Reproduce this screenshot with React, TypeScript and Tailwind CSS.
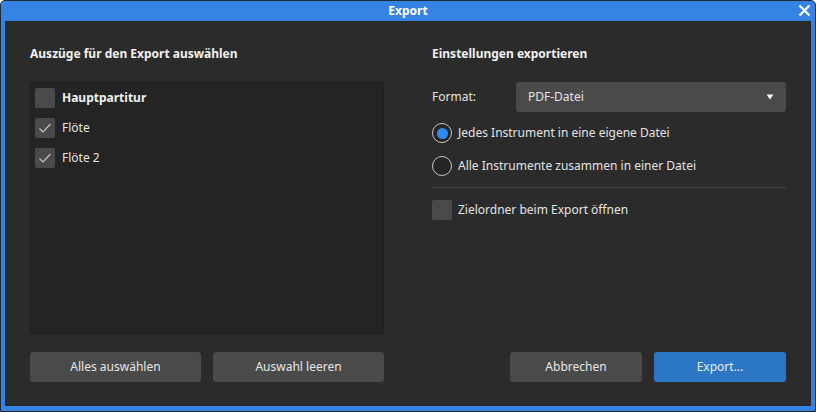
import { useState } from "react";

const font = { fontFamily: '"Noto Sans", "Open Sans", sans-serif' };

type Part = { name: string; checked: boolean; bold?: boolean };

const CheckBox = ({ checked }: { checked: boolean }) => (
  <span className="flex h-[20px] w-[20px] shrink-0 items-center justify-center rounded-[2px] bg-[#4a4a4a]">
    {checked && (
      <svg width="14" height="14" viewBox="0 0 14 14" fill="none">
        <path d="M1.5 7.5 L5 11 L12.5 3" stroke="#c8c8c8" strokeWidth="1.1" />
      </svg>
    )}
  </span>
);

const Radio = ({ on }: { on: boolean }) => (
  <span className="flex h-[20px] w-[20px] shrink-0 items-center justify-center rounded-full border-[1.5px] border-[#c9c9c9] bg-[#252525]">
    {on && <span className="h-[11px] w-[11px] rounded-full bg-[#2f8af2]" />}
  </span>
);

const Button = ({ label, primary }: { label: string; primary?: boolean }) => (
  <button
    className={
      primary
        ? "h-[30px] rounded-[3px] bg-[#2b77c5] text-[12px] text-[#eaeaea]"
        : "h-[30px] rounded-[3px] bg-[#4a4a4a] text-[12px] text-[#e6e6e6]"
    }
  >
    {label}
  </button>
);

const App = () => {
  const [parts] = useState<Part[]>([
    { name: "Hauptpartitur", checked: false, bold: true },
    { name: "Flöte", checked: true },
    { name: "Flöte 2", checked: true },
  ]);

  return (
    <div
      style={font}
      className="flex h-[412px] w-[816px] flex-col overflow-hidden rounded-t-[5px] border border-[#1d2a38] bg-[#3584e4]"
    >
      {/* title bar */}
      <div className="relative flex h-[20px] shrink-0 items-center justify-center">
        <span className="text-[12px] font-bold text-white">Export</span>
        <svg className="absolute right-[4px] top-[3px]" width="13" height="13" viewBox="0 0 13 13">
          <path d="M1.5 1.5 L11.5 11.5 M11.5 1.5 L1.5 11.5" stroke="#fff" strokeWidth="2.2" />
        </svg>
      </div>

      <div className="mx-[4px] mb-[5px] flex flex-1 gap-[48px] border border-[#262626] bg-[#2b2b2b] px-[24px] pb-[23px] pt-[22px] text-[12px] text-[#e3e3e3]">
        {/* parts */}
        <div className="flex w-[354px] flex-col">
          <div className="h-[20px] font-bold leading-[20px] text-[#f0f0f0]">Auszüge für den Export auswählen</div>
          <div className="mt-[18px] flex h-[252px] flex-col border border-[#1f1f1f] bg-[#242424] px-[4px]">
            {parts.map((p) => (
              <label key={p.name} className="flex h-[30px] items-center gap-[7px]">
                <CheckBox checked={p.checked} />
                <span className={p.bold ? "font-bold text-[#f0f0f0]" : ""}>{p.name}</span>
              </label>
            ))}
          </div>
          <div className="mt-auto grid grid-cols-2 gap-[12px]">
            <Button label="Alles auswählen" />
            <Button label="Auswahl leeren" />
          </div>
        </div>

        {/* settings */}
        <div className="flex w-[354px] flex-col">
          <div className="h-[20px] font-bold leading-[20px] text-[#f0f0f0]">Einstellungen exportieren</div>
          <div className="mt-[18px] flex h-[30px] items-center">
            <span className="w-[84px]">Format:</span>
            <div className="flex h-[30px] flex-1 items-center justify-between rounded-[3px] bg-[#4a4a4a] pl-[12px] pr-[12px]">
              <span>PDF-Datei</span>
              <svg width="8" height="6" viewBox="0 0 8 6">
                <path d="M0.5 0.5 L7.5 0.5 L4 5.5 Z" fill="#f4f4f4" />
              </svg>
            </div>
          </div>
          <div className="mt-[6px] flex h-[30px] items-center gap-[6px]">
            <Radio on />
            <span>Jedes Instrument in eine eigene Datei</span>
          </div>
          <div className="mt-[3px] flex h-[30px] items-center gap-[6px]">
            <Radio on={false} />
            <span>Alle Instrumente zusammen in einer Datei</span>
          </div>
          <div className="mt-[6px] h-px bg-[#454545]" />
          <div className="mt-[12px] flex h-[20px] items-center gap-[6px]">
            <CheckBox checked={false} />
            <span>Zielordner beim Export öffnen</span>
          </div>
          <div className="mt-auto grid grid-cols-2 gap-[12px] pl-[78px]">
            <Button label="Abbrechen" />
            <Button label="Export..." primary />
          </div>
        </div>
      </div>
    </div>
  );
};

export default App;
